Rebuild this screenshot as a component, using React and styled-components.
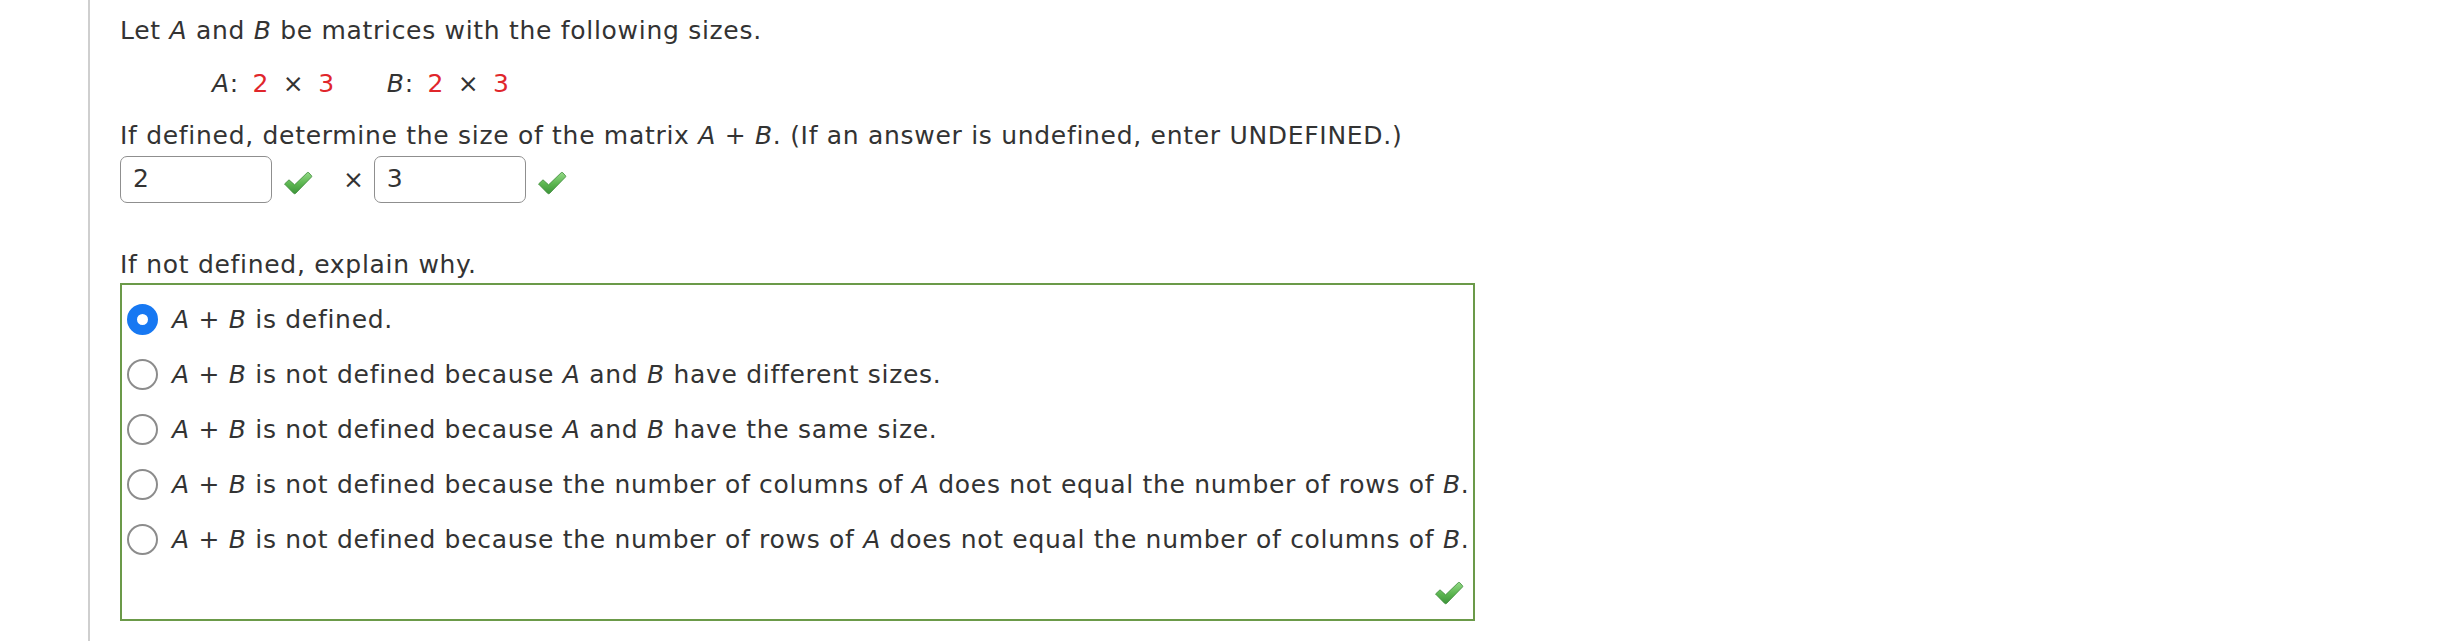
import React from "react";
import styled, { createGlobalStyle } from "styled-components";

const GlobalStyle = createGlobalStyle`
  html, body {
    margin: 0;
    padding: 0;
    background: #fff;
  }
  body {
    font-family: "DejaVu Sans", Verdana, sans-serif;
    font-size: 25px;
    letter-spacing: 0.7px;
    color: #333;
  }
`;

const Page = styled.div`
  height: 641px;
  padding-left: 88px;
  box-sizing: border-box;
`;

const Question = styled.div`
  height: 100%;
  border-left: 2px solid #cfcfcf;
  padding: 14px 0 0 30px;
  box-sizing: border-box;
`;

const Line = styled.div`
  line-height: 34px;
  height: 34px;
  margin-top: ${(p) => p.$gap || 0}px;
  white-space: nowrap;
`;

const Sizes = styled(Line)`
  display: flex;
  gap: 52px;
  padding-left: 92px;
  word-spacing: 5px;
`;

const I = styled.span`
  font-style: italic;
`;

const Red = styled.span`
  color: #e0262b;
`;

const AnswerRow = styled.div`
  display: flex;
  align-items: center;
  height: 47px;
  margin-top: 3px;
`;

const Field = styled.div`
  width: 152px;
  height: 47px;
  box-sizing: border-box;
  border: 1.5px solid #8f8f8f;
  border-radius: 7px;
  padding-left: 12px;
  line-height: 44px;
  color: #333;
`;

const Times = styled.span`
  margin: 0 9px 0 30px;
  line-height: 47px;
`;

const CheckSlot = styled.span`
  display: inline-flex;
  margin-left: ${(p) => p.$left || 0}px;
  margin-top: 6px;
`;

const Choices = styled.div`
  margin-top: 1px;
  width: 1355px;
  height: 338px;
  box-sizing: border-box;
  border: 2px solid #6b9a49;
  padding: 7px 9px 14px 5px;
  display: flex;
  flex-direction: column;
`;

const Option = styled.label`
  display: flex;
  align-items: center;
  height: 55px;
  line-height: 55px;
  white-space: nowrap;
`;

const Radio = styled.span`
  width: 31px;
  height: 31px;
  box-sizing: border-box;
  border-radius: 50%;
  margin-right: 14px;
  flex-shrink: 0;
  background: #fff;
  border: ${(p) => (p.$on ? "10px solid #1778f2" : "2.5px solid #8c8c8c")};
`;

const Footer = styled.div`
  margin-top: auto;
  display: flex;
  justify-content: flex-end;
`;

const Check = () => (
  <svg width="30" height="24" viewBox="0 0 30 24">
    <defs>
      <linearGradient id="ck" x1="0" y1="0" x2="0" y2="1">
        <stop offset="0" stopColor="#93d986" />
        <stop offset="0.55" stopColor="#5bb54f" />
        <stop offset="1" stopColor="#3d943a" />
      </linearGradient>
    </defs>
    <path
      d="M1.5 13 L6 8.8 L11.6 13.8 L24.3 1.6 Q25 1 25.7 1.6 L28.6 4.8 Q29 5.4 28.5 6 L12.8 22.2 Q11.6 23.3 10.5 22.2 Z"
      fill="url(#ck)"
      stroke="#3f8a3b"
      strokeWidth="0.8"
      strokeLinejoin="round"
    />
  </svg>
);

const AB = () => (
  <>
    <I>A</I> + <I>B</I>
  </>
);

const options = [
  [<AB key="a" />, " is defined."],
  [<AB key="a" />, " is not defined because ", <I key="b">A</I>, " and ", <I key="c">B</I>, " have different sizes."],
  [<AB key="a" />, " is not defined because ", <I key="b">A</I>, " and ", <I key="c">B</I>, " have the same size."],
  [<AB key="a" />, " is not defined because the number of columns of ", <I key="b">A</I>, " does not equal the number of rows of ", <I key="c">B</I>, "."],
  [<AB key="a" />, " is not defined because the number of rows of ", <I key="b">A</I>, " does not equal the number of columns of ", <I key="c">B</I>, "."],
];

export default function App() {
  return (
    <>
      <GlobalStyle />
      <Page>
        <Question>
          <Line>
            Let <I>A</I> and <I>B</I> be matrices with the following sizes.
          </Line>
          <Sizes $gap={19}>
            <span>
              <I>A</I>: <Red>2</Red> × <Red>3</Red>
            </span>
            <span>
              <I>B</I>: <Red>2</Red> × <Red>3</Red>
            </span>
          </Sizes>
          <Line $gap={18}>
            If defined, determine the size of the matrix <I>A</I> + <I>B</I>. (If an answer is undefined, enter UNDEFINED.)
          </Line>
          <AnswerRow>
            <Field>2</Field>
            <CheckSlot $left={11}>
              <Check />
            </CheckSlot>
            <Times>×</Times>
            <Field>3</Field>
            <CheckSlot $left={11}>
              <Check />
            </CheckSlot>
          </AnswerRow>
          <Line $gap={45}>If not defined, explain why.</Line>
          <Choices>
            {options.map((parts, i) => (
              <Option key={i}>
                <Radio $on={i === 0} />
                <span>{parts}</span>
              </Option>
            ))}
            <Footer>
              <Check />
            </Footer>
          </Choices>
        </Question>
      </Page>
    </>
  );
}
